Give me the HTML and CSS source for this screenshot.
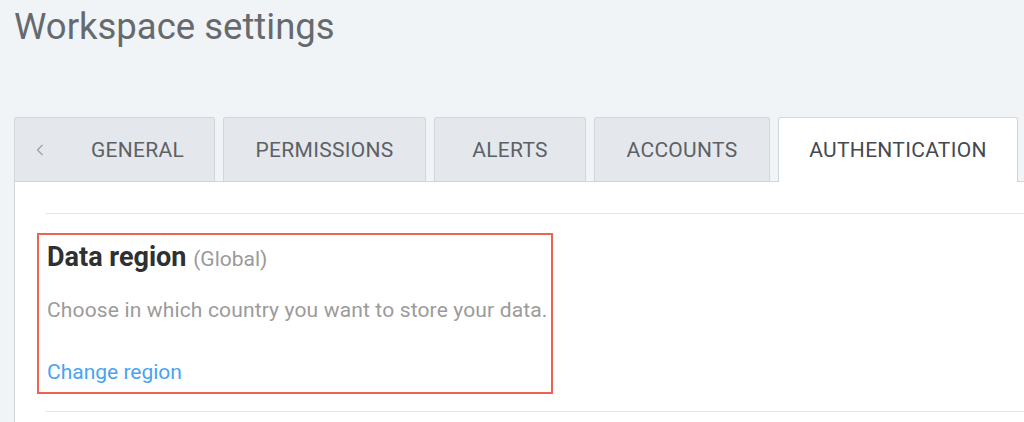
FILE: index.html
```html
<!DOCTYPE html>
<html lang="en">
<head>
<meta charset="utf-8">
<title>Workspace settings</title>
<link rel="stylesheet" href="styles.css">
</head>
<body>
<div class="page">
  <h1 class="page-title">Workspace settings</h1>
  <nav class="tabs">
    <div class="tab tab-general">
      <svg class="chevron" width="8" height="12" viewBox="0 0 8 12"><polyline points="6.5,1 1.5,6 6.5,11" fill="none" stroke="#9aa3ab" stroke-width="1.3"/></svg>
      <span class="tab-label">GENERAL</span>
    </div>
    <div class="tab tab-permissions"><span class="tab-label">PERMISSIONS</span></div>
    <div class="tab tab-alerts"><span class="tab-label">ALERTS</span></div>
    <div class="tab tab-accounts"><span class="tab-label">ACCOUNTS</span></div>
    <div class="tab tab-auth active"><span class="tab-label">AUTHENTICATION</span></div>
  </nav>
  <main class="panel">
    <hr class="divider">
    <section class="region-box">
      <h2 class="section-title">Data region <span class="section-sub">(Global)</span></h2>
      <p class="section-desc">Choose in which country you want to store your data.</p>
      <a class="section-link" href="#">Change region</a>
    </section>
    <hr class="divider divider-bottom">
  </main>
</div>
</body>
</html>
```

FILE: styles.css
```css
* { box-sizing: border-box; }
html, body { margin: 0; padding: 0; }
body {
  background: #f1f4f7;
  font-family: Roboto, "Noto Sans", Arial, sans-serif;
  width: 1024px;
  height: 422px;
  overflow: hidden;
}
.page {
  padding: 5px 0 0 14px;
}
.page-title {
  margin: 0;
  font-size: 36.5px;
  line-height: 43px;
  font-weight: 400;
  color: #666a6e;
}
.tabs {
  display: flex;
  align-items: flex-end;
  gap: 8px;
  margin-top: 69px;
  height: 64px;
}
.tab {
  position: relative;
  z-index: 1;
  height: 64px;
  display: flex;
  align-items: center;
  justify-content: center;
  background: #e4e8ec;
  border: 1px solid #cfd7de;
  border-bottom: 0;
  border-radius: 3px 3px 0 0;
  font-size: 21px;
  letter-spacing: 0.3px;
  color: #5d6166;
  flex: none;
}
.tab-general { width: 201px; justify-content: flex-start; padding-left: 21px; }
.tab-general .tab-label { margin-left: 47px; }
.tab-permissions { width: 203px; }
.tab-alerts { width: 152px; }
.tab-accounts { width: 176px; }
.tab-auth { width: 240px; }
.tab.active {
  background: #ffffff;
  height: 65px;
  margin-bottom: -1px;
  color: #45494e;
}
.chevron { display: block; }
.panel {
  background: #ffffff;
  border-top: 1px solid #cfd7de;
  border-left: 1px solid #cfd7de;
  padding: 31px 0 0 31px;
  height: 260px;
}
.divider {
  margin: 0;
  border: 0;
  height: 1px;
  background: #e0e5ea;
}
.region-box {
  width: 516px;
  margin: 19px 0 0 -9px;
  border: 2px solid #ec6350;
  padding: 6px 0 7px 8px;
}
.section-title {
  margin: 0;
  font-size: 27px;
  line-height: 32px;
  font-weight: 700;
  color: #2e3033;
}
.section-sub {
  font-size: 21px;
  font-weight: 400;
  color: #9a9a9a;
}
.section-desc {
  margin: 22px 0 0;
  font-size: 21px;
  line-height: 26px;
  letter-spacing: 0.15px;
  color: #9b9b9b;
}
.section-link {
  display: block;
  margin-top: 36px;
  font-size: 21px;
  line-height: 26px;
  color: #4aa3ee;
  text-decoration: none;
}
.divider-bottom { margin-top: 17px; }
```
